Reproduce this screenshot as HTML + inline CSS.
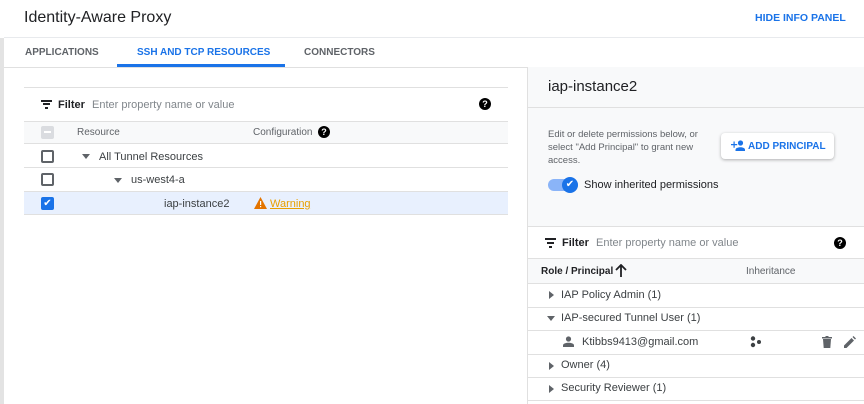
<!DOCTYPE html>
<html><head><style>
*{box-sizing:border-box;margin:0;padding:0}
body{width:864px;height:404px;overflow:hidden;background:#fff;font-family:"Liberation Sans",Arial,sans-serif;color:#202124;position:relative}
.a{position:absolute}
.t{font-size:11px;color:#3c4043}
.tab{position:absolute;top:47px;font-size:10px;font-weight:bold;color:#5f6368}
.cb{position:absolute;width:13px;height:13px;border:2px solid #5f6368;border-radius:2px}
.tri{position:absolute;width:0;height:0;border-left:4px solid transparent;border-right:4px solid transparent;border-top:5px solid #5f6368}
.rtri{position:absolute;width:0;height:0;border-top:4px solid transparent;border-bottom:4px solid transparent;border-left:5px solid #5f6368}
.q{position:absolute;width:12px;height:12px;border-radius:50%;background:#000;color:#fff;font-size:9px;font-weight:bold;text-align:center;line-height:12px}
.line{position:absolute;height:1px;background:#e0e0e0}
</style></head><body>
<div class="a" style="left:0;top:38px;width:4px;height:366px;background:#e3e3e3"></div>
<div class="a" style="left:24px;top:9px;font-size:16px;color:#202124">Identity-Aware Proxy</div>
<div class="a" style="left:755px;top:12px;font-size:10.5px;font-weight:bold;color:#1a73e8">HIDE INFO PANEL</div>
<div class="line" style="left:4px;top:37px;width:860px;background:#e8eaed"></div>
<div class="tab" style="left:25px">APPLICATIONS</div>
<div class="tab" style="left:137px;color:#1a73e8">SSH AND TCP RESOURCES</div>
<div class="tab" style="left:304px">CONNECTORS</div>
<div class="a" style="left:117px;top:64px;width:168px;height:3px;background:#1a73e8"></div>
<div class="line" style="left:4px;top:67px;width:860px"></div>

<!-- left table -->
<div class="line" style="left:24px;top:87px;width:484px"></div>
<div class="a" style="left:41px;top:100px;width:11px;height:2px;background:#202124"></div>
<div class="a" style="left:43px;top:103px;width:7px;height:2px;background:#202124"></div>
<div class="a" style="left:45px;top:107px;width:3px;height:2px;background:#202124"></div>
<div class="a" style="left:58px;top:99px;font-size:11px;font-weight:bold">Filter</div>
<div class="a" style="left:92px;top:99px;font-size:11px;color:#80868b">Enter property name or value</div>
<div class="q" style="left:479px;top:98px">?</div>
<div class="a" style="left:24px;top:121px;width:484px;height:23px;background:#f8f9fa;border-top:1px solid #e0e0e0;border-bottom:1px solid #e0e0e0"></div>
<div class="a" style="left:41px;top:126px;width:13px;height:13px;background:#dadce0;border-radius:2px"><div style="margin:5px 3px;width:7px;height:2px;background:#fff"></div></div>
<div class="a t" style="left:77px;top:127px;font-size:10px;color:#5f6368">Resource</div>
<div class="a t" style="left:253px;top:127px;font-size:10px;color:#5f6368">Configuration</div>
<div class="q" style="left:318px;top:126px">?</div>
<div class="cb" style="left:41px;top:150px"></div>
<div class="tri" style="left:82px;top:154px"></div>
<div class="a t" style="left:99px;top:151px">All Tunnel Resources</div>
<div class="line" style="left:24px;top:167px;width:484px"></div>
<div class="cb" style="left:41px;top:173px"></div>
<div class="tri" style="left:114px;top:178px"></div>
<div class="a t" style="left:131px;top:174px">us-west4-a</div>
<div class="a" style="left:24px;top:191px;width:484px;height:24px;background:#e8f0fe;border-top:1px solid #e0e0e0;border-bottom:1px solid #e0e0e0"></div>
<div class="a" style="left:41px;top:197px;width:13px;height:13px;background:#1a73e8;border-radius:2px;color:#fff;font-size:10px;line-height:13px;text-align:center">✔</div>
<div class="a t" style="left:164px;top:198px">iap-instance2</div>
<svg class="a" style="left:254px;top:197px" width="13" height="12" viewBox="0 0 13 12"><path d="M6.5 0L13 12H0z" fill="#e37400"/><rect x="6" y="4" width="1.2" height="4" fill="#fff"/><rect x="6" y="9" width="1.2" height="1.2" fill="#fff"/></svg>
<div class="a" style="left:270px;top:198px;font-size:11px;color:#e8a000;text-decoration:underline">Warning</div>

<!-- right panel -->
<div class="a" style="left:527px;top:67px;width:337px;height:159px;background:#f8f9fa;border-left:1px solid #e0e0e0"></div>
<div class="a" style="left:527px;top:67px;width:1px;height:337px;background:#e0e0e0"></div>
<div class="a" style="left:548px;top:78px;font-size:15px">iap-instance2</div>
<div class="line" style="left:528px;top:107px;width:336px"></div>
<div class="a" style="left:548px;top:128px;font-size:9.5px;line-height:13px;color:#5f6368;width:170px">Edit or delete permissions below, or select "Add Principal" to grant new access.</div>
<div class="a" style="left:721px;top:133px;width:113px;height:26px;background:#fff;border-radius:4px;box-shadow:0 1px 3px rgba(0,0,0,.3)"></div>
<svg class="a" style="left:731px;top:140px" width="14" height="11" viewBox="0 0 14 11"><path d="M0 4h2.5V1.5h1.2V4h2.5v1.2H3.7v2.5H2.5V5.2H0z" fill="#1a73e8"/><circle cx="9.5" cy="3" r="2.6" fill="#1a73e8"/><path d="M4.5 11v-1.3c0-1.8 3-2.5 5-2.5s4.5.7 4.5 2.5V11z" fill="#1a73e8"/></svg>
<div class="a" style="left:748px;top:141px;font-size:10px;font-weight:bold;color:#1a73e8">ADD PRINCIPAL</div>
<div class="a" style="left:548px;top:179px;width:30px;height:12px;border-radius:6px;background:#8ab4f8"></div>
<div class="a" style="left:562px;top:177px;width:16px;height:16px;border-radius:50%;background:#1a73e8;color:#fff;font-size:10px;text-align:center;line-height:16px">✔</div>
<div class="a" style="left:584px;top:179px;font-size:11px">Show inherited permissions</div>
<div class="line" style="left:528px;top:226px;width:336px"></div>
<div class="a" style="left:545px;top:238px;width:11px;height:2px;background:#202124"></div>
<div class="a" style="left:547px;top:242px;width:7px;height:2px;background:#202124"></div>
<div class="a" style="left:549px;top:246px;width:3px;height:2px;background:#202124"></div>
<div class="a" style="left:562px;top:237px;font-size:11px;font-weight:bold">Filter</div>
<div class="a" style="left:596px;top:237px;font-size:11px;color:#80868b">Enter property name or value</div>
<div class="q" style="left:834px;top:237px">?</div>
<div class="a" style="left:528px;top:258px;width:336px;height:26px;background:#f8f9fa;border-top:1px solid #e0e0e0;border-bottom:1px solid #e0e0e0"></div>
<div class="a" style="left:541px;top:266px;font-size:10px;font-weight:bold">Role / Principal</div>
<svg class="a" style="left:615px;top:264px" width="12" height="13" viewBox="0 0 12 13"><path d="M6 1v12M1 6l5-5 5 5" stroke="#202124" stroke-width="1.8" fill="none"/></svg>
<div class="a" style="left:746px;top:266px;font-size:10px;color:#5f6368">Inheritance</div>
<div class="rtri" style="left:549px;top:291px"></div>
<div class="a t" style="left:561px;top:289px">IAP Policy Admin (1)</div>
<div class="line" style="left:528px;top:307px;width:336px"></div>
<div class="tri" style="left:547px;top:316px"></div>
<div class="a t" style="left:561px;top:312px">IAP-secured Tunnel User (1)</div>
<div class="line" style="left:528px;top:330px;width:336px"></div>
<svg class="a" style="left:563px;top:336px" width="11" height="11" viewBox="0 0 11 11"><circle cx="5.5" cy="3" r="2.6" fill="#5f6368"/><path d="M0 11v-1.5C0 7.5 3 6.8 5.5 6.8S11 7.5 11 9.5V11z" fill="#5f6368"/></svg>
<div class="a t" style="left:582px;top:336px">Ktibbs9413@gmail.com</div>
<svg class="a" style="left:750px;top:336px" width="12" height="12" viewBox="0 0 12 12"><circle cx="3" cy="2.5" r="2.2" fill="#3c4043"/><circle cx="3" cy="9" r="2.2" fill="#3c4043"/><circle cx="9" cy="6" r="2" fill="#3c4043"/></svg>
<svg class="a" style="left:822px;top:336px" width="10" height="12" viewBox="0 0 10 12"><rect x="0" y="1" width="10" height="1.5" fill="#5f6368"/><rect x="3.5" y="0" width="3" height="1.5" fill="#5f6368"/><path d="M1 3h8l-.7 9H1.7z" fill="#5f6368"/></svg>
<svg class="a" style="left:844px;top:336px" width="12" height="12" viewBox="0 0 12 12"><path d="M0 12v-2.5L7.5 2l2.5 2.5L2.5 12zM8.5 1l1-1 2.5 2.5-1 1z" fill="#5f6368"/></svg>
<div class="line" style="left:528px;top:354px;width:336px"></div>
<div class="rtri" style="left:549px;top:362px"></div>
<div class="a t" style="left:561px;top:359px">Owner (4)</div>
<div class="line" style="left:528px;top:377px;width:336px"></div>
<div class="rtri" style="left:549px;top:385px"></div>
<div class="a t" style="left:561px;top:382px">Security Reviewer (1)</div>
<div class="line" style="left:528px;top:400px;width:336px"></div>
</body></html>
